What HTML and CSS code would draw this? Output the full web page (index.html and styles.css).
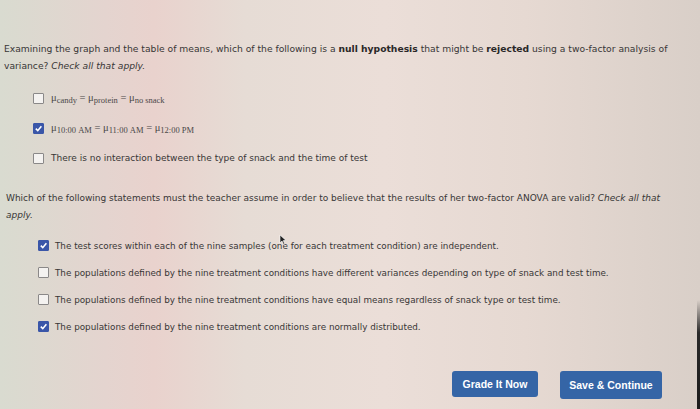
FILE: index.html
```html
<!DOCTYPE html>
<html>
<head>
<meta charset="utf-8">
<link rel="stylesheet" href="styles.css">
</head>
<body>
<div class="page">
  <section class="q q1">
    <p class="prompt">Examining the graph and the table of means, which of the following is a <b>null hypothesis</b> that might be <b>rejected</b> using a two-factor analysis of variance? <i>Check all that apply.</i></p>
    <ul class="opts opts1">
      <li><span class="cb"></span><span class="math">μ<sub>candy</sub> = μ<sub>protein</sub> = μ<sub>no snack</sub></span></li>
      <li><span class="cb on"><svg viewBox="0 0 10 10"><path d="M2 5.2 L4.2 7.4 L8.2 2.6" fill="none" stroke="#fff" stroke-width="1.8"/></svg></span><span class="math">μ<sub>10:00 AM</sub> = μ<sub>11:00 AM</sub> = μ<sub>12:00 PM</sub></span></li>
      <li><span class="cb"></span><span>There is no interaction between the type of snack and the time of test</span></li>
    </ul>
  </section>
  <section class="q q2">
    <p class="prompt">Which of the following statements must the teacher assume in order to believe that the results of her two-factor ANOVA are valid? <i>Check all that apply.</i></p>
    <ul class="opts opts2">
      <li><span class="cb on"><svg viewBox="0 0 10 10"><path d="M2 5.2 L4.2 7.4 L8.2 2.6" fill="none" stroke="#fff" stroke-width="1.8"/></svg></span><span>The test scores within each of the nine samples (one for each treatment condition) are independent.</span></li>
      <li><span class="cb"></span><span>The populations defined by the nine treatment conditions have different variances depending on type of snack and test time.</span></li>
      <li><span class="cb"></span><span>The populations defined by the nine treatment conditions have equal means regardless of snack type or test time.</span></li>
      <li><span class="cb on"><svg viewBox="0 0 10 10"><path d="M2 5.2 L4.2 7.4 L8.2 2.6" fill="none" stroke="#fff" stroke-width="1.8"/></svg></span><span>The populations defined by the nine treatment conditions are normally distributed.</span></li>
    </ul>
  </section>
  <div class="actions">
    <button class="btn grade">Grade It Now</button>
    <button class="btn save">Save &amp; Continue</button>
  </div>
</div>
<svg class="cursor" viewBox="0 0 8 12"><path d="M1 1 L1 9 L3 7 L4.6 10.5 L5.8 10 L4.3 6.6 L7 6.4 Z" fill="#222" stroke="#fff" stroke-width="0.6"/></svg>
</body>
</html>
```

FILE: styles.css
```css
html, body {
  margin: 0;
  padding: 0;
  width: 700px;
  height: 409px;
  overflow: hidden;
}
body {
  position: relative;
  background: linear-gradient(90deg, #d9dbd0 0%, #e4d4cf 15%, #e9d2cd 22%, #e6dcd5 35%, #ebded8 55%, #e6d9d2 75%, #d9cfc8 100%);
  font-family: "DejaVu Sans", Verdana, sans-serif;
  color: #383636;
  font-size: 9px;
}
body::after {
  content: "";
  position: absolute;
  right: 0;
  top: 300px;
  width: 3px;
  height: 109px;
  background: linear-gradient(180deg, rgba(40,40,40,0) 0%, #2a2a2a 30%, #1c1c1c 100%);
}
.page {
  padding: 40px 0 0 4px;
  width: 680px;
}
.prompt {
  margin: 0;
  line-height: 17px;
  width: 672px;
}
.q1 .prompt { font-size: 9.2px; }
.prompt b { color: #2a2828; }
.opts {
  list-style: none;
  margin: 0;
  padding: 0;
}
.opts li {
  display: flex;
  align-items: center;
  gap: 7px;
}
.opts1 { padding: 9px 0 0 29px; }
.opts1 li { height: 30px; }
.cb {
  width: 9px;
  height: 9px;
  border: 1px solid #8a8888;
  background: #f4f2f0;
  border-radius: 1px;
  flex: none;
  display: flex;
}
.cb.on {
  background: #3a56a8;
  border-color: #3a56a8;
}
.cb svg { width: 9px; height: 9px; }
.math {
  font-family: "Liberation Serif", "Times New Roman", serif;
  font-size: 10.5px;
  color: #4a4848;
}
.math sub {
  font-size: 8.5px;
  vertical-align: -2px;
}
.q2 { padding-top: 17px; }
.q2 .prompt { padding-left: 2px; }
.opts2 { padding: 8px 0 0 34px; }
.opts2 li { height: 27px; font-size: 8.8px; gap: 6px; }
.actions {
  display: flex;
  justify-content: flex-end;
  gap: 22px;
  padding: 31px 22px 0 0;
}
.btn {
  background: #3565a6;
  color: #fff;
  border: none;
  border-radius: 3px;
  font-family: "Liberation Sans", Arial, sans-serif;
  font-weight: bold;
  font-size: 10.5px;
  height: 26px;
  padding: 0;
  white-space: nowrap;
}
.grade { width: 86px; }
.save { width: 102px; height: 28px; }
.cursor {
  position: absolute;
  left: 279px;
  top: 234px;
  width: 8px;
  height: 12px;
}
```
